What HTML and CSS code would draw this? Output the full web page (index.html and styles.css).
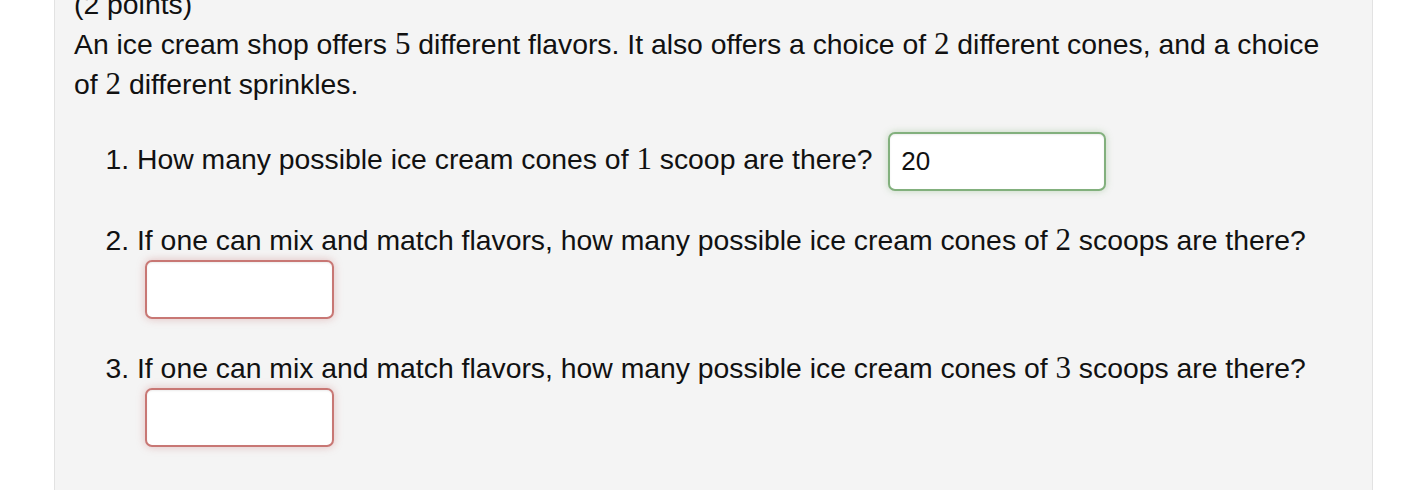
FILE: index.html
```html
<!DOCTYPE html>
<html>
<head>
<meta charset="utf-8">
<link rel="stylesheet" href="styles.css">
</head>
<body>
<div class="panel">
  <div class="problem">
    <p class="points">(2 points)</p>
    <p class="intro">An ice cream shop offers <span class="m">5</span> different flavors. It also offers a choice of <span class="m">2</span> different cones, and a choice of <span class="m">2</span> different sprinkles.</p>
    <ol class="questions">
      <li>How many possible ice cream cones of <span class="m">1</span> scoop are there? <input class="ans ans-wide correct" type="text" value="20"></li>
      <li>If one can mix and match flavors, how many possible ice cream cones of <span class="m">2</span> scoops are there? <input class="ans incorrect" type="text" value=""></li>
      <li>If one can mix and match flavors, how many possible ice cream cones of <span class="m">3</span> scoops are there? <input class="ans incorrect" type="text" value=""></li>
    </ol>
  </div>
</div>
</body>
</html>
```
FILE: styles.css
```css
html, body {
  margin: 0;
  padding: 0;
  background: #ffffff;
  overflow: hidden;
}
body {
  font-family: "Liberation Sans", Arial, Helvetica, sans-serif;
  font-size: 28.35px;
  color: #111111;
}
.panel {
  margin-left: 54px;
  width: 1317px;
  height: 520px;
  margin-top: -20px;
  background: #f4f4f4;
  border-left: 1px solid #e2e2e2;
  border-right: 1px solid #e2e2e2;
}
.problem {
  padding: 4px 30px 0 19px;
  line-height: 40px;
}
.points, .intro {
  margin: 0;
}
.m {
  font-family: "Liberation Serif", "Times New Roman", serif;
  font-size: 31px;
  line-height: 1;
}
.questions {
  margin: 28px 0 0 0;
  padding-left: 63px;
}
.questions li {
  margin-bottom: 29px;
}
.questions li:first-child {
  margin-bottom: 29px;
}
.ans {
  box-sizing: border-box;
  height: 59px;
  width: 189px;
  margin: 0 0 0 8px;
  padding: 0 11px;
  font-family: "Liberation Sans", Arial, Helvetica, sans-serif;
  font-size: 26px;
  color: #111111;
  background: #ffffff;
  border-radius: 7px;
  outline: none;
  vertical-align: middle;
}
.ans-wide {
  width: 218px;
}
.correct {
  border: 2px solid #82b07d;
  box-shadow: 0 0 7px rgba(100, 160, 90, 0.35), inset 0 1px 2px rgba(0, 0, 0, 0.08);
}
.incorrect {
  border: 2px solid #c87774;
  box-shadow: 0 0 8px rgba(200, 110, 110, 0.4), inset 0 1px 2px rgba(0, 0, 0, 0.08);
}
```
